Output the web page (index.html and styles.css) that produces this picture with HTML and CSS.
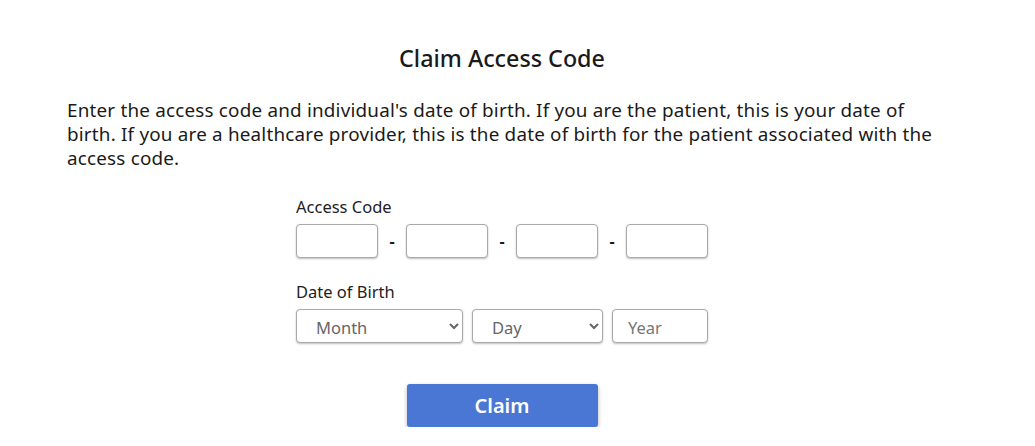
FILE: index.html
```html
<!DOCTYPE html>
<html>
<head>
    <title>Claim Access Code</title>
    <link rel="stylesheet" href="styles.css">
</head>
<body>
    <div class="claim-page">
        <h2>Claim Access Code</h2>

        <p class="intro">Enter the access code and individual's date of birth. If you are the patient, this is your date of birth. If you are a healthcare provider, this is the date of birth for the patient associated with the access code.</p>

        <form class="claim-form" onsubmit="return false;">
            <div class="form-group">
                <label for="code1">Access Code</label>
                <div class="code-row">
                    <input type="text" id="code1" maxlength="4">
                    <span class="dash">-</span>
                    <input type="text" id="code2" maxlength="4">
                    <span class="dash">-</span>
                    <input type="text" id="code3" maxlength="4">
                    <span class="dash">-</span>
                    <input type="text" id="code4" maxlength="4">
                </div>
            </div>

            <div class="form-group">
                <label for="month">Date of Birth</label>
                <div class="dob-row">
                    <select id="month" class="month">
                        <option value="">Month</option>
                        <option value="1">January</option>
                        <option value="2">February</option>
                        <option value="3">March</option>
                    </select>
                    <select id="day" class="day">
                        <option value="">Day</option>
                        <option value="1">1</option>
                        <option value="2">2</option>
                    </select>
                    <input type="text" id="year" class="year" placeholder="Year">
                </div>
            </div>

            <div class="actions">
                <button type="submit">Claim</button>
            </div>
        </form>
    </div>
</body>
</html>
```

FILE: styles.css
```css
body {
    margin: 0;
    font-family: "Noto Sans", "Open Sans", sans-serif;
    color: #1a1a1a;
    background: #fff;
}
.claim-page {
    width: 870px;
    margin-left: 67px;
    padding-top: 44px;
}
h2 {
    margin: 0;
    font-size: 23.3px;
    font-weight: 500;
    line-height: 28px;
    text-align: center;
}
.intro {
    margin: 26px 0 0;
    font-size: 18.85px;
    line-height: 24px;
    letter-spacing: 0.2px;
}
.claim-form {
    width: 412px;
    margin: 27px auto 0;
}
.form-group {
    margin-bottom: 24px;
}
label {
    display: block;
    font-size: 16.5px;
    line-height: 20px;
    margin-bottom: 7px;
    color: #222;
}
input[type="text"],
select {
    box-sizing: border-box;
    height: 34px;
    border: 1px solid #a9a9a9;
    border-radius: 4px;
    box-shadow: 0 1px 2px rgba(0, 0, 0, 0.25);
    background: #fff;
    font-family: inherit;
    font-size: 16.5px;
    color: #666;
    padding: 2px 15px 0;
}
.code-row {
    display: flex;
    align-items: center;
}
.code-row input {
    width: 82px;
}
.dash {
    width: 29px;
    text-align: center;
    font-size: 16px;
    font-weight: bold;
}
.dob-row {
    display: flex;
    gap: 9px;
}
.month {
    width: 167px;
}
.day {
    width: 131px;
}
.year {
    width: 96px;
    padding: 0 12px 2px;
}
.year::placeholder {
    color: #777;
}
.actions {
    text-align: center;
    padding-top: 17px;
}
button {
    width: 191px;
    height: 43px;
    background-color: #4a77d4;
    color: #fff;
    border: none;
    border-radius: 3px;
    box-shadow: 0 2px 4px rgba(0, 0, 0, 0.3);
    font-family: inherit;
    font-size: 20px;
    font-weight: 600;
    cursor: pointer;
}
```
